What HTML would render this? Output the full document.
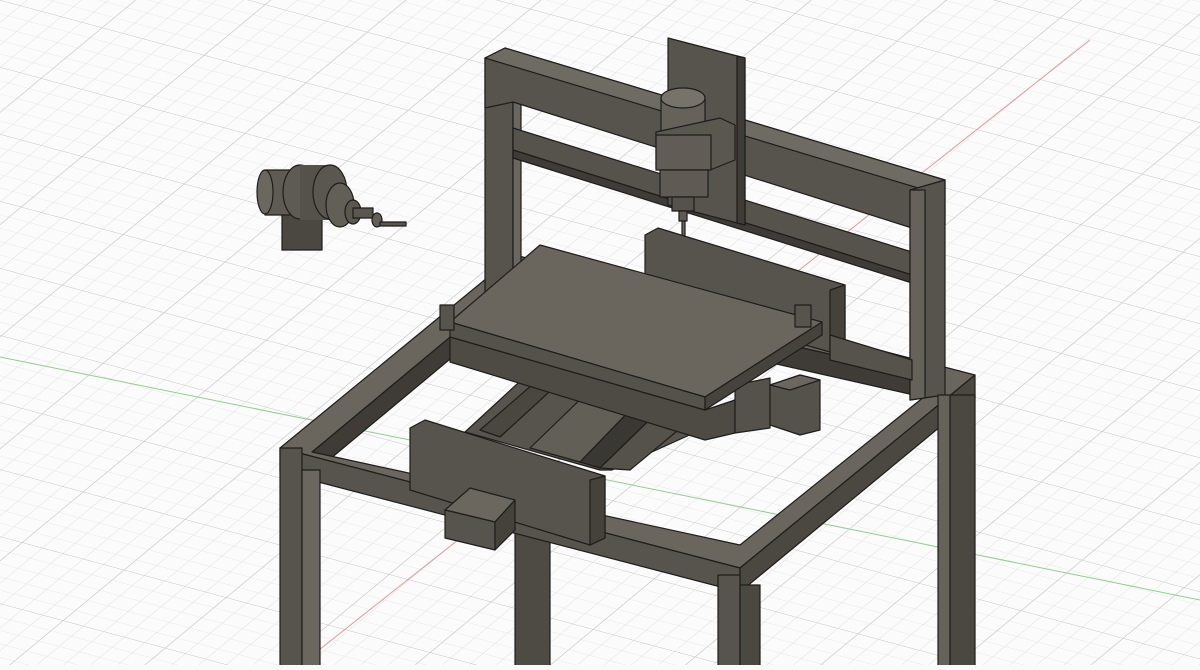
<!DOCTYPE html>
<html><head><meta charset="utf-8"><style>html,body{margin:0;padding:0;background:#fafafa;overflow:hidden}</style></head>
<body>
<svg width="1200" height="665" viewBox="0 0 1200 665" xmlns="http://www.w3.org/2000/svg">
<defs>
<pattern id="g" width="20" height="20" patternUnits="userSpaceOnUse" patternTransform="matrix(1.02 0.275 -0.61 0.506 0 0)">
<path d="M0 0H20M0 0V20" stroke="#dedede" stroke-width="1" fill="none"/>
</pattern>
<pattern id="G" width="100" height="100" patternUnits="userSpaceOnUse" patternTransform="matrix(1.02 0.275 -0.61 0.506 0 0)">
<path d="M0 0H100M0 0V100" stroke="#c4c4c4" stroke-width="1.3" fill="none"/>
</pattern>
</defs>
<rect width="1200" height="665" fill="#fbfbfb"/>
<rect width="1200" height="665" fill="url(#g)"/>
<rect width="1200" height="665" fill="url(#G)"/>
<line x1="0" y1="357" x2="1200" y2="600" stroke="#8fd08f" stroke-width="1"/>
<line x1="300" y1="665" x2="1090" y2="40" stroke="#e29a9a" stroke-width="1"/>

<g stroke="#1e1d1b" stroke-width="1.2" stroke-linejoin="round">
<!-- detached spindle -->
<rect x="282" y="205" width="40" height="45" fill="#4b4842"/>
<rect x="265" y="170" width="25" height="45" fill="#5e5b54"/>
<ellipse cx="265" cy="192" rx="8" ry="22" fill="#6a675f"/>
<ellipse cx="300" cy="192" rx="17" ry="27" fill="#5e5b54"/>
<rect x="300" y="165" width="30" height="55" fill="#55524b" stroke="none"/>
<ellipse cx="330" cy="192" rx="17" ry="27" fill="#5a574f"/>
<ellipse cx="340" cy="205" rx="14" ry="22" fill="#625f57"/>
<ellipse cx="353" cy="212" rx="8" ry="12" fill="#5a574f"/>
<rect x="353" y="208" width="20" height="10" fill="#5a574f"/>
<ellipse cx="377" cy="220" rx="5" ry="7" fill="#625f57"/>
<rect x="380" y="222" width="26" height="4" fill="#5a574f"/>

<!-- back leg -->
<rect x="515" y="500" width="35" height="170" fill="#4e4b45"/>
<!-- ring inner faces -->
<polygon points="312,452 515,283 945,380 945,402 515,305 312,474" fill="#3f3c37"/>
<!-- ring top -->
<path d="M280,448 L515,255 L975,375 L740,568 Z M312,452 L740,545 L945,380 L515,283 Z" fill="#6a665e" fill-rule="evenodd"/>

<!-- gantry left post -->
<rect x="485" y="58" width="28" height="290" fill="#57544d"/>
<rect x="513" y="100" width="8" height="240" fill="#6b675f"/>
<!-- gantry top beam -->
<polygon points="485,58 505,48 945,180 945,225 921,232 912,228 513,102 485,108" fill="#57544d"/>
<polygon points="485,58 505,48 945,180 925,190" fill="#6e6b63"/>
<!-- middle rail -->
<polygon points="513,128 912,252 912,275 513,150" fill="#56534c"/>
<polygon points="513,150 912,275 912,283 513,158" fill="#3f3c37"/>
<!-- gantry right post -->
<polygon points="910,190 945,180 945,395 910,400" fill="#57544d"/>
<polygon points="910,190 925,190 925,398 910,400" fill="#66625a"/>

<!-- Z plate -->
<polygon points="668,38 745,58 745,225 668,205" fill="#57544d"/>
<polygon points="737,56 745,58 745,225 737,223" fill="#3f3c37"/>
<!-- spindle -->
<rect x="661" y="98" width="44" height="45" fill="#66625a"/>
<ellipse cx="683" cy="98" rx="22" ry="10" fill="#77736b"/>
<polygon points="656,132 720,118 735,125 735,160 710,170 656,168" fill="#5a574f"/>
<rect x="656" y="135" width="55" height="35" fill="#615d56"/>
<rect x="660" y="170" width="48" height="27" fill="#5f5b54"/>
<rect x="672" y="197" width="22" height="14" fill="#55524b"/>
<rect x="679" y="211" width="8" height="10" fill="#5f5b54"/>
<rect x="682" y="221" width="3" height="17" fill="#6b675f"/>

<!-- Y plate -->
<polygon points="645,235 658,228 845,285 845,345 830,352 645,300" fill="#57544d"/>
<polygon points="830,290 845,285 845,345 830,352" fill="#45423c"/>
<polygon points="830,335 912,360 912,380 830,360" fill="#56534c"/>

<!-- rails -->
<polygon points="465,432 530,372 735,415 705,428 612,470 600,470" fill="#57544d"/>
<polygon points="480,430 540,378 560,382 500,437" fill="#4a4741"/>
<polygon points="530,448 590,390 640,400 580,462" fill="#625f57"/>
<polygon points="580,462 640,400 665,405 600,468" fill="#3a3833"/>
<polygon points="600,468 665,405 700,412 630,470" fill="#55524b"/>

<!-- table carriage -->
<polygon points="450,337 705,410 735,400 735,433 705,440 450,362" fill="#4e4b45"/>
<polygon points="735,385 770,378 770,428 735,433" fill="#55524b"/>
<polygon points="770,385 800,375 820,380 820,430 800,435 770,425" fill="#55524b"/>
<polygon points="770,385 800,375 820,380 790,390" fill="#6b675f"/>
<!-- table top -->
<polygon points="450,322 540,245 822,322 705,397" fill="#6a665e"/>
<polygon points="450,322 705,397 705,410 450,337" fill="#55524b"/>
<polygon points="705,397 822,322 822,335 705,410" fill="#46433d"/>
<rect x="440" y="305" width="14" height="25" fill="#57544d"/>
<rect x="795" y="305" width="16" height="22" fill="#57544d"/>

<!-- ring front faces -->
<polygon points="280,448 740,568 740,592 280,472" fill="#57544d"/>
<polygon points="740,568 975,375 975,398 740,592" fill="#4b4842"/>
<!-- legs -->
<rect x="280" y="448" width="22" height="220" fill="#57544d"/>
<rect x="302" y="470" width="18" height="200" fill="#6b675f"/>
<rect x="718" y="575" width="22" height="95" fill="#57544d"/>
<rect x="740" y="585" width="20" height="85" fill="#4b4842"/>
<rect x="950" y="395" width="25" height="275" fill="#4b4842"/>
<rect x="938" y="395" width="12" height="275" fill="#66625a"/>

<!-- X plate -->
<polygon points="410,428 425,420 605,476 605,538 590,545 410,490" fill="#57544d"/>
<polygon points="590,480 605,476 605,538 590,545" fill="#45423c"/>
<!-- X motor -->
<polygon points="445,510 470,488 515,500 495,522" fill="#6b675f"/>
<polygon points="445,510 495,522 495,550 445,538" fill="#57544d"/>
<polygon points="495,522 515,500 515,530 495,550" fill="#45423c"/>
</g>
</svg>
</body></html>
